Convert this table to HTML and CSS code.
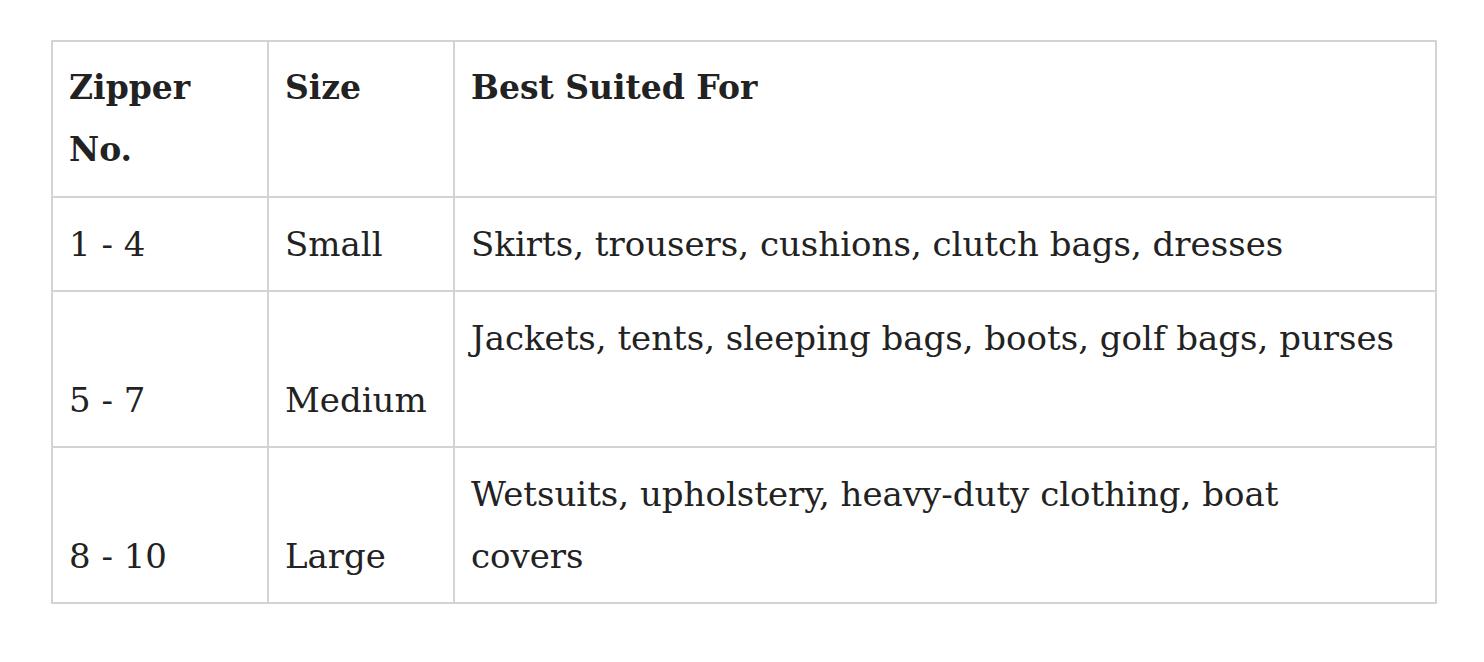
FILE: index.html
```html
<!DOCTYPE html>
<html lang="en">
<head>
<meta charset="utf-8">
<title>Zipper sizes</title>
<link rel="stylesheet" href="styles.css">
</head>
<body>
<main class="page">
  <table class="sizes">
    <colgroup>
      <col class="c-no">
      <col class="c-size">
      <col class="c-use">
    </colgroup>
    <thead>
      <tr>
        <th>Zipper No.</th>
        <th>Size</th>
        <th>Best Suited For</th>
      </tr>
    </thead>
    <tbody>
      <tr>
        <td>1 - 4</td>
        <td>Small</td>
        <td class="use">Skirts, trousers, cushions, clutch bags, dresses</td>
      </tr>
      <tr>
        <td>5 - 7</td>
        <td>Medium</td>
        <td class="use use-spaced">Jackets, tents, sleeping bags, boots, golf bags, purses</td>
      </tr>
      <tr>
        <td>8 - 10</td>
        <td>Large</td>
        <td class="use">Wetsuits, upholstery, heavy-duty clothing, boat<br>covers</td>
      </tr>
    </tbody>
  </table>
</main>
</body>
</html>
```

FILE: styles.css
```css
html, body {
  margin: 0;
  padding: 0;
  background: #ffffff;
}

.page {
  padding: 40px 47px 0 51px;
  font-family: "DejaVu Serif", "Liberation Serif", serif;
  font-size: 34px;
  color: #222222;
}

.sizes {
  width: 1386px;
  border-collapse: collapse;
  table-layout: fixed;
  border: 2px solid #d3d3d3;
}

.c-no { width: 216px; }
.c-size { width: 186px; }

.sizes th,
.sizes td {
  border: 2px solid #d3d3d3;
  padding: 15px 16px;
  line-height: 62px;
  text-align: left;
}

.sizes th {
  font-weight: bold;
  font-size: 33px;
  vertical-align: top;
}

.sizes td {
  font-weight: normal;
  vertical-align: bottom;
}

.sizes td.use {
  vertical-align: top;
}

.sizes td.use-spaced {
  padding-bottom: 77px;
}
```
